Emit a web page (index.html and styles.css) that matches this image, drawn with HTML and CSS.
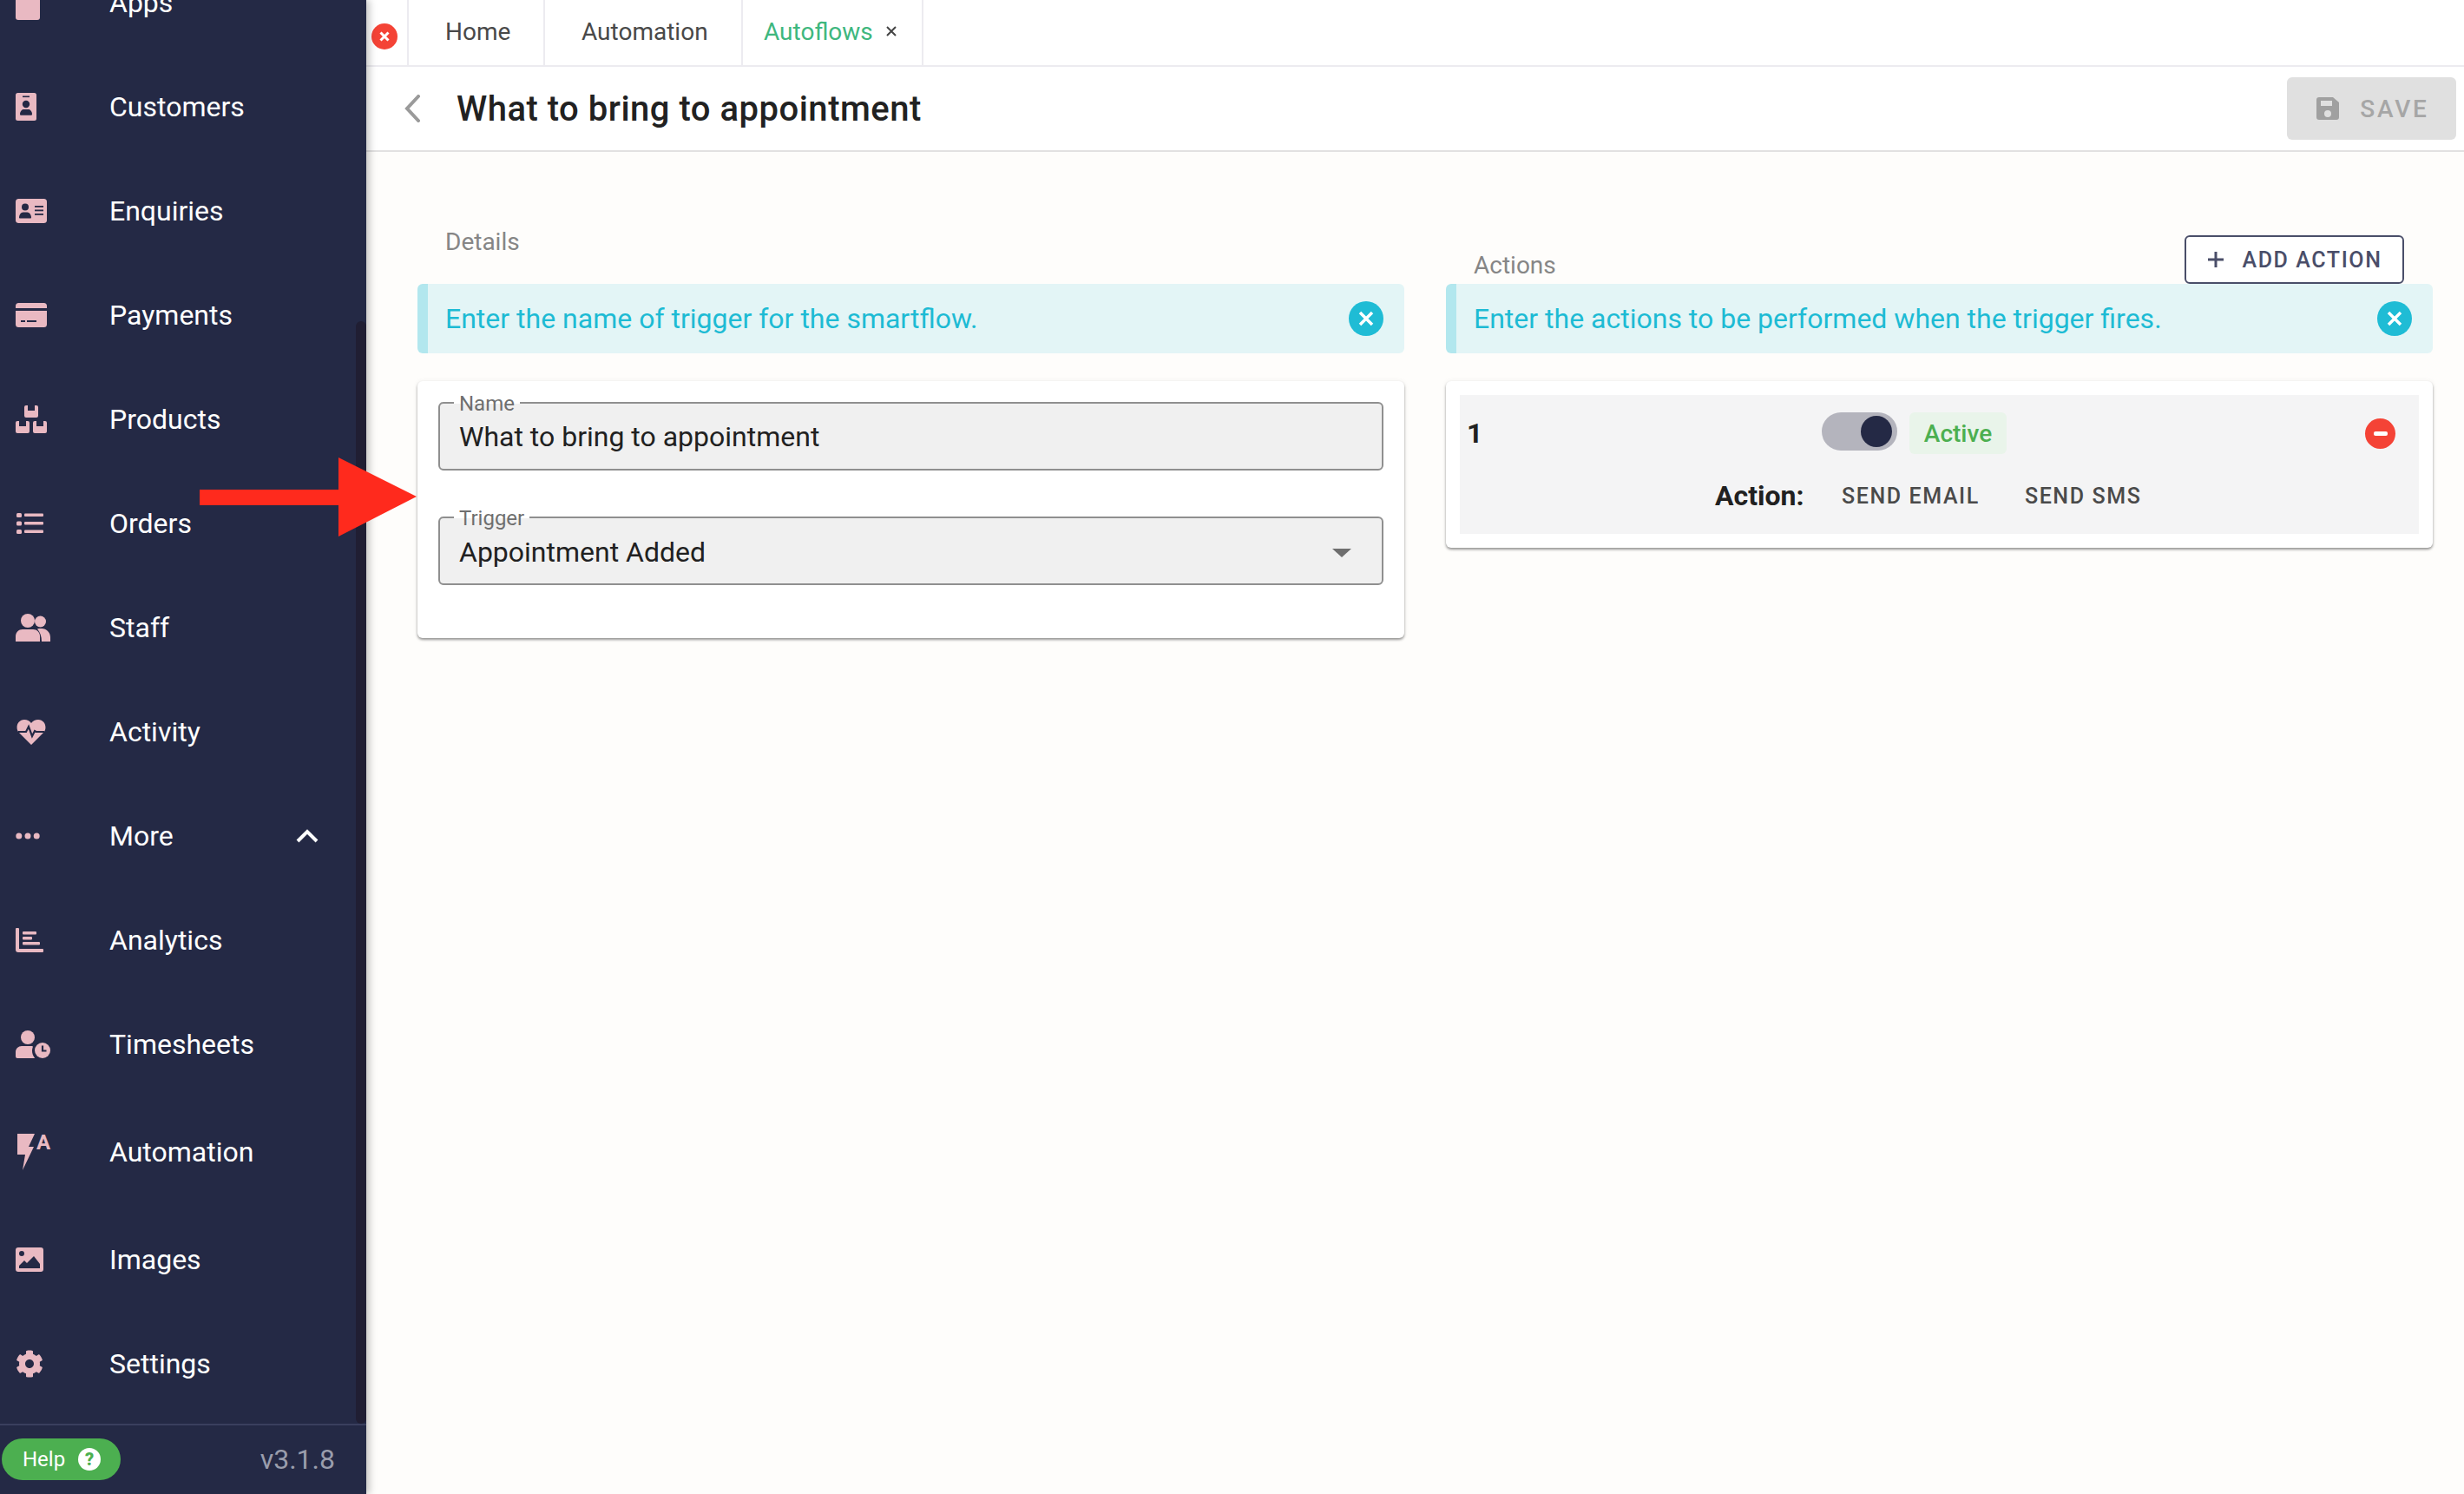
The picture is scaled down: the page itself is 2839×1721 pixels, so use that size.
FILE: index.html
```html
<!DOCTYPE html>
<html lang="en">
<head>
<meta charset="utf-8">
<title>What to bring to appointment</title>
<link rel="stylesheet" href="styles.css">
</head>
<body>
<div class="app">
  <aside class="side">
    <nav class="nav">
      <div class="scrollbar"></div>
      <a class="row first"><span class="ic"><svg width="28" height="40" viewBox="0 0 28 40"><rect y="0" width="28" height="40" rx="3"/></svg></span><span class="lbl">Apps</span></a>
      <a class="row"><span class="ic"><svg width="24" height="32" viewBox="0 0 24 32"><rect width="24" height="32" rx="2.5"/><rect x="8" y="3.500" width="8" height="1.600" class="cut"/><circle cx="12" cy="13" r="4.200" class="cut"/><path class="cut" d="M5 24.500c0-3.600 2.600-5.600 4.400-5.600h5.200c1.800 0 4.400 2 4.400 5.600 0 .9-.6 1.200-1.200 1.200H6.200c-.6 0-1.200-.3-1.200-1.200z"/></svg></span><span class="lbl">Customers</span></a>
      <a class="row"><span class="ic"><svg width="36" height="28" viewBox="0 0 36 28"><rect width="36" height="28" rx="3.500"/><circle cx="11" cy="9.500" r="4" class="cut"/><path class="cut" d="M4 21.500c0-3.200 2.400-6 4.500-6h5c2.100 0 4.500 2.800 4.500 6 0 .6-.5 1-1 1H5c-.5 0-1-.4-1-1z"/><rect x="22" y="8" width="10" height="1.800" class="cut"/><rect x="22" y="12.500" width="10" height="1.800" class="cut"/><rect x="22" y="17" width="10" height="1.800" class="cut"/></svg></span><span class="lbl">Enquiries</span></a>
      <a class="row"><span class="ic"><svg width="36" height="28" viewBox="0 0 36 28"><path d="M3.500 0h29A3.500 3.500 0 0 1 36 3.500V6H0V3.500A3.500 3.500 0 0 1 3.500 0zM0 9h36v15.500a3.500 3.500 0 0 1-3.500 3.500h-29A3.500 3.500 0 0 1 0 24.500z"/><rect x="6" y="20" width="5" height="2" class="cut"/><rect x="13" y="20" width="11" height="2" class="cut"/></svg></span><span class="lbl">Payments</span></a>
      <a class="row"><span class="ic"><svg width="36" height="32" viewBox="0 0 36 32"><path d="M10 2a2 2 0 0 1 2-2h2v6h8V0h2a2 2 0 0 1 2 2v10a2 2 0 0 1-2 2H12a2 2 0 0 1-2-2zM0 20a2 2 0 0 1 2-2h2v6h8v-6h2a2 2 0 0 1 2 2v10a2 2 0 0 1-2 2H2a2 2 0 0 1-2-2zM20 20a2 2 0 0 1 2-2h2v6h8v-6h2a2 2 0 0 1 2 2v10a2 2 0 0 1-2 2H22a2 2 0 0 1-2-2z"/></svg></span><span class="lbl">Products</span></a>
      <a class="row"><span class="ic"><svg width="32" height="26" viewBox="0 0 32 26"><rect x="1" y="1" width="6" height="5" rx="1.500"/><rect x="1" y="10.500" width="6" height="5" rx="1.500"/><rect x="1" y="20" width="6" height="5" rx="1.500"/><rect x="10" y="1.500" width="22" height="3.500" rx="1"/><rect x="10" y="11" width="22" height="3.500" rx="1"/><rect x="10" y="20.500" width="22" height="3.500" rx="1"/></svg></span><span class="lbl">Orders</span></a>
      <a class="row"><span class="ic"><svg width="40" height="32" viewBox="0 0 40 32"><circle cx="28.500" cy="9" r="6.500"/><path d="M27 17h3c5.500 0 10 4.500 10 10v5H30c0-6-2-11-5-14.500.6-.3 1.300-.5 2-.5z"/><circle cx="14" cy="8" r="8"/><path d="M8 18h12c4.500 0 8 3.500 8 8v6H0v-6c0-4.500 3.500-8 8-8z"/></svg></span><span class="lbl">Staff</span></a>
      <a class="row"><span class="ic"><svg width="36" height="30" viewBox="0 0 36 30"><path d="M18 30 4 16C-1 11 2 1 10 1c3.500 0 6 1.500 8 4 2-2.500 4.500-4 8-4 8 0 11 10 6 15z"/><path class="cutline" d="M3 15h9l3-6 4 11 3-6 1.500 1H33"/></svg></span><span class="lbl">Activity</span></a>
      <a class="row more"><span class="ic"><svg width="28" height="8" viewBox="0 0 28 8"><circle cx="3.800" cy="4" r="3.500"/><circle cx="14" cy="4" r="3.500"/><circle cx="24.200" cy="4" r="3.500"/></svg></span><span class="lbl">More</span><svg class="chev" width="26" height="16" viewBox="0 0 26 16"><path d="M2 14 13 3l11 11" /></svg></a>
      <a class="row"><span class="ic"><svg width="32" height="28" viewBox="0 0 32 28"><path d="M0 1a1 1 0 0 1 1-1h2a1 1 0 0 1 1 1v22.500a.500.500 0 0 0 .500.500H31a1 1 0 0 1 1 1v2a1 1 0 0 1-1 1H3a3 3 0 0 1-3-3z"/><rect x="8" y="4" width="16" height="3.500" rx="1"/><rect x="8" y="10" width="11" height="3.500" rx="1"/><rect x="8" y="16" width="20" height="3.500" rx="1"/></svg></span><span class="lbl">Analytics</span></a>
      <a class="row"><span class="ic"><svg width="40" height="32" viewBox="0 0 40 32"><circle cx="14" cy="8" r="8"/><path d="M7 18h10.500c.9 0 1.700.1 2.500.4-.7 2-1 3.600-1 5.100 0 3.200 1.200 6.100 3.200 8.500H2a2 2 0 0 1-2-2v-5c0-3.900 3.100-7 7-7z"/><circle cx="31" cy="23" r="9"/><path class="cutline" d="M31 17.500V23.500h4.500"/></svg></span><span class="lbl">Timesheets</span></a>
      <a class="row tall"><span class="ic ic-auto"><svg class="bolt" width="20" height="42" viewBox="0 0 20 42"><path d="M0 0h20l-7 15h6L6 42l3-18H0z"/></svg><span class="auto-a">A</span></span><span class="lbl">Automation</span></a>
      <a class="row"><span class="ic"><svg width="32" height="28" viewBox="0 0 32 28"><rect width="32" height="28" rx="3"/><circle cx="7" cy="7" r="3" class="cut"/><path class="cut" d="M4 24v-3l6-6 3 3 8-8 7 9v5z"/></svg></span><span class="lbl">Images</span></a>
      <a class="row"><span class="ic"><svg width="32" height="32" viewBox="0 0 512 512"><path d="M487.400 315.700l-42.600-24.600c4.300-23.200 4.300-47 0-70.200l42.600-24.600c4.900-2.800 7.100-8.600 5.500-14-11.100-35.600-30-67.800-54.700-94.600-3.800-4.100-10-5.100-14.800-2.300L380.800 110c-17.900-15.400-38.500-27.300-60.800-35.100V25.800c0-5.600-3.900-10.500-9.400-11.700-36.700-8.200-74.300-7.800-109.200 0-5.500 1.200-9.400 6.100-9.400 11.700V75c-22.200 7.900-42.800 19.800-60.800 35.100L88.700 85.500c-4.900-2.800-11-1.900-14.800 2.300-24.700 26.700-43.600 58.900-54.700 94.600-1.700 5.400.6 11.200 5.500 14L67.300 221c-4.300 23.200-4.300 47 0 70.200l-42.600 24.600c-4.900 2.800-7.100 8.600-5.500 14 11.100 35.600 30 67.800 54.700 94.600 3.800 4.100 10 5.100 14.800 2.300l42.600-24.600c17.900 15.400 38.500 27.300 60.800 35.100v49.200c0 5.600 3.900 10.500 9.400 11.700 36.700 8.200 74.300 7.800 109.200 0 5.500-1.200 9.400-6.100 9.400-11.700v-49.200c22.200-7.900 42.800-19.800 60.800-35.100l42.600 24.600c4.900 2.800 11 1.900 14.800-2.300 24.700-26.700 43.600-58.900 54.700-94.600 1.500-5.500-.7-11.300-5.600-14.100zM256 336c-44.100 0-80-35.900-80-80s35.900-80 80-80 80 35.900 80 80-35.900 80-80 80z"/></svg></span><span class="lbl">Settings</span></a>
    </nav>
    <footer class="foot">
      <span class="help">Help <span class="help-q">?</span></span>
      <span class="ver">v3.1.8</span>
    </footer>
  </aside>
  <main class="main">
    <div class="tabs">
      <div class="tab-x"><span class="x-dot"><svg width="14" height="14" viewBox="0 0 14 14"><path d="M2.500 2.500l9 9M11.500 2.500l-9 9"/></svg></span></div>
      <div class="tab t-home">Home</div>
      <div class="tab t-auto">Automation</div>
      <div class="tab t-flow"><span class="on">Autoflows</span><svg class="tab-close" width="16" height="16" viewBox="0 0 16 16"><path d="M3 3l10 10M13 3 3 13"/></svg></div>
    </div>
    <header class="head">
      <svg class="back" width="20" height="32" viewBox="0 0 20 32"><path d="M17 2 4 16l13 14"/></svg>
      <h1 class="title">What to bring to appointment</h1>
      <button class="save"><svg width="26" height="26" viewBox="0 0 26 26"><path fill-rule="evenodd" d="M3 0h16l7 6v17a3 3 0 0 1-3 3H3a3 3 0 0 1-3-3V3a3 3 0 0 1 3-3zm2 4v6h13V4zm8 11a4 4 0 1 0 0 8 4 4 0 0 0 0-8z"/></svg>SAVE</button>
    </header>
    <div class="cols">
      <section class="col">
        <div class="sec-head"><span class="sec-title s-details">Details</span></div>
        <div class="alert"><span>Enter the name of trigger for the smartflow.</span><span class="al-x"><svg width="20" height="20" viewBox="0 0 20 20"><path d="M3 3l14 14M17 3 3 17"/></svg></span></div>
        <div class="card form">
          <div class="field"><span class="legend">Name</span>What to bring to appointment</div>
          <div class="field trig"><span class="legend">Trigger</span>Appointment Added<span class="caret"></span></div>
        </div>
      </section>
      <section class="col">
        <div class="sec-head"><span class="sec-title s-actions">Actions</span><button class="add"><svg width="22" height="22" viewBox="0 0 22 22"><path d="M11 2v18M2 11h18"/></svg>ADD ACTION</button></div>
        <div class="alert"><span>Enter the actions to be performed when the trigger fires.</span><span class="al-x"><svg width="20" height="20" viewBox="0 0 20 20"><path d="M3 3l14 14M17 3 3 17"/></svg></span></div>
        <div class="card actions">
          <div class="act">
            <div class="act-top">
              <b class="num">1</b>
              <span class="toggle"><span class="knob"></span></span>
              <span class="chip">Active</span>
              <span class="minus"><span class="minus-bar"></span></span>
            </div>
            <div class="act-bot">
              <b class="act-l">Action:</b>
              <span class="act-b">SEND EMAIL</span>
              <span class="act-b">SEND SMS</span>
            </div>
          </div>
        </div>
      </section>
    </div>
  </main>
</div>
<div class="arrow"><svg width="250" height="92" viewBox="0 0 250 92"><path d="M0 37h160V0l90 45-90 46V55H0z"/></svg></div>
</body>
</html>
```
FILE: styles.css
```css
* { box-sizing: border-box; }
html, body { margin: 0; height: 100%; }
body { font-family: Roboto, "Liberation Sans", sans-serif; overflow: hidden; background: #fefdfb; }
.app { display: flex; width: 2839px; height: 1721px; overflow: hidden; }

/* sidebar */
.side { width: 422px; flex: none; background: #242945; display: flex; flex-direction: column; box-shadow: 4px 0 8px rgba(0,0,0,.22); position: relative; z-index: 2; }
.nav { height: 1640px; overflow: hidden; position: relative; flex: none; }
.scrollbar { position: absolute; right: 0; top: 370px; bottom: 0; width: 12px; background: #201e33; border-radius: 6px; }
.row { display: flex; align-items: center; height: 120px; color: #fff; font-size: 32px; position: relative; }
.row.first { margin-top: -57px; }
.row.tall { height: 128px; }
.ic { width: 126px; flex: none; padding-left: 18px; display: flex; align-items: center; }
.ic svg { display: block; fill: #e9b9c2; }
.ic .cut { fill: #242945; }
.ic .cutline { fill: none; stroke: #242945; stroke-width: 2.200; }
.ic-auto { position: relative; height: 40px; }
.ic .bolt { margin-left: 2px; }
.auto-a { position: absolute; left: 42px; top: -5px; color: #e9b9c2; font: 700 24px Roboto, sans-serif; }
.chev { position: absolute; left: 341px; top: 52px; fill: none; stroke: #fff; stroke-width: 4; }
.foot { height: 81px; border-top: 2px solid #3a3f5e; display: flex; align-items: flex-start; justify-content: space-between; padding: 15px 36px 0 2px; }
.help { width: 137px; height: 48px; border-radius: 24px; background: #4caf50; color: #fff; font-size: 24px; display: flex; align-items: center; padding-left: 24px; gap: 15px; }
.help-q { width: 26px; height: 26px; border-radius: 50%; background: #fff; color: #4caf50; font-weight: 900; font-size: 20px; display: flex; align-items: center; justify-content: center; }
.ver { color: #9a9dac; font-size: 32px; line-height: 48px; }

/* main */
.main { flex: 1; min-width: 0; display: flex; flex-direction: column; }
.tabs { height: 77px; background: #fff; border-bottom: 2px solid #ecebf0; display: flex; flex: none; }
.tab-x { width: 49px; border-right: 2px solid #ecebf0; padding: 27px 0 0 6px; }
.x-dot { width: 30px; height: 30px; border-radius: 50%; background: #f44336; display: flex; align-items: center; justify-content: center; }
.x-dot svg { fill: none; stroke: #fff; stroke-width: 3; }
.tab { border-right: 2px solid #ecebf0; font-size: 28px; color: #494949; display: flex; align-items: center; padding-left: 42px; padding-bottom: 3px; }
.t-home { width: 157px; }
.t-auto { width: 228px; }
.t-flow { width: 208px; gap: 13px; padding-left: 24px; }
.on { color: #3eb77e; }
.tab-close { fill: none; stroke: #444; stroke-width: 2; }
.head { height: 98px; background: #fff; border-bottom: 2px solid #e2e1e1; display: flex; align-items: center; flex: none; position: relative; }
.back { margin-left: 43px; fill: none; stroke: #9a9a9a; stroke-width: 4; stroke-linecap: round; flex: none; }
.title { margin: 0 0 0 41px; font-size: 40px; font-weight: 500; color: #212121; letter-spacing: .5px; }
.save { margin-left: auto; margin-right: 9px; width: 195px; height: 72px; border: 0; border-radius: 6px; background: #e0e0e0; color: #a6a6a6; font: 500 28px Roboto, sans-serif; letter-spacing: 2.800px; display: flex; align-items: center; justify-content: center; gap: 24px; padding: 0 0 0 3px; }
.save svg { fill: #a0a0a0; flex: none; }
.cols { display: grid; grid-template-columns: 1137px 1137px; gap: 48px; padding-left: 59px; }
.sec-head { height: 152px; display: flex; align-items: flex-end; justify-content: space-between; padding-left: 32px; }
.sec-title { font-size: 28px; color: #868686; line-height: 34px; }
.s-details { margin-bottom: 31px; }
.s-actions { margin-bottom: 4px; }
.add { width: 253px; height: 56px; margin-right: 33px; border: 2px solid #4a4e69; border-radius: 6px; background: #fff; color: #4a4e69; font: 500 25px Roboto, sans-serif; letter-spacing: 1.600px; display: flex; align-items: center; justify-content: center; gap: 19px; padding: 0; }
.add svg { fill: none; stroke: #4a4e69; stroke-width: 3; }
.alert { height: 80px; border-left: 12px solid #b2e7ee; border-radius: 6px; background: #e3f5f6; color: #1dbbd4; font-size: 32px; display: flex; align-items: center; justify-content: space-between; padding: 0 24px 0 20px; }
.al-x { width: 40px; height: 40px; border-radius: 50%; background: #1fbcd5; display: flex; align-items: center; justify-content: center; }
.al-x svg { fill: none; stroke: #fff; stroke-width: 3.500; }
.card { margin-top: 32px; background: #fff; border-radius: 6px; box-shadow: 0 2px 3px rgba(0,0,0,.4), 0 0 6px rgba(0,0,0,.06); }
.form { height: 296px; padding: 24px; display: flex; flex-direction: column; gap: 53px; }
.field { height: 79px; border: 2px solid #8f8f8f; border-radius: 6px; background: #f0f0f0; font-size: 32px; color: #212121; display: flex; align-items: center; padding-left: 22px; position: relative; }
.field.trig { margin-top: 0; padding-top: 2px; }
.legend { position: absolute; left: 16px; top: -14px; padding: 0 6px; font-size: 24px; line-height: 28px; color: #6f6f6f; background: linear-gradient(#fff 50%, #f0f0f0 50%); }
.caret { position: absolute; right: 35px; top: 35px; border-left: 11px solid transparent; border-right: 11px solid transparent; border-top: 10px solid #6e6e6e; }
.actions { height: 192px; padding: 16px; }
.act { height: 160px; background: #f4f4f5; }
.act-top { display: flex; align-items: flex-start; padding: 20px 27px 0 8px; }
.num { width: 409px; font-size: 32px; font-weight: 700; color: #212121; line-height: 48px; }
.toggle { width: 87px; height: 44px; border-radius: 22px; background: #b4b4bd; position: relative; }
.knob { position: absolute; right: 6px; top: 4px; width: 36px; height: 36px; border-radius: 50%; background: #242945; }
.chip { margin-left: 14px; width: 112px; height: 48px; border-radius: 6px; background: #e9f4ea; color: #4caf50; font-size: 28px; font-weight: 500; display: flex; align-items: center; justify-content: center; }
.minus { margin-left: auto; margin-top: 7px; width: 35px; height: 35px; border-radius: 50%; background: #f44336; display: flex; align-items: center; justify-content: center; }
.minus-bar { width: 16px; height: 5px; border-radius: 2px; background: #fff; }
.act-bot { display: flex; align-items: center; height: 48px; margin-top: 24px; padding-left: 294px; }
.act-l { font-size: 32px; font-weight: 700; color: #212121; width: 146px; }
.act-b { font-size: 25px; font-weight: 500; letter-spacing: 1.600px; color: #4a4a4a; margin-right: 52px; }

/* annotation */
.arrow { position: absolute; left: 230px; top: 527px; z-index: 5; line-height: 0; }
.arrow svg { fill: #ff2a1d; }
```
